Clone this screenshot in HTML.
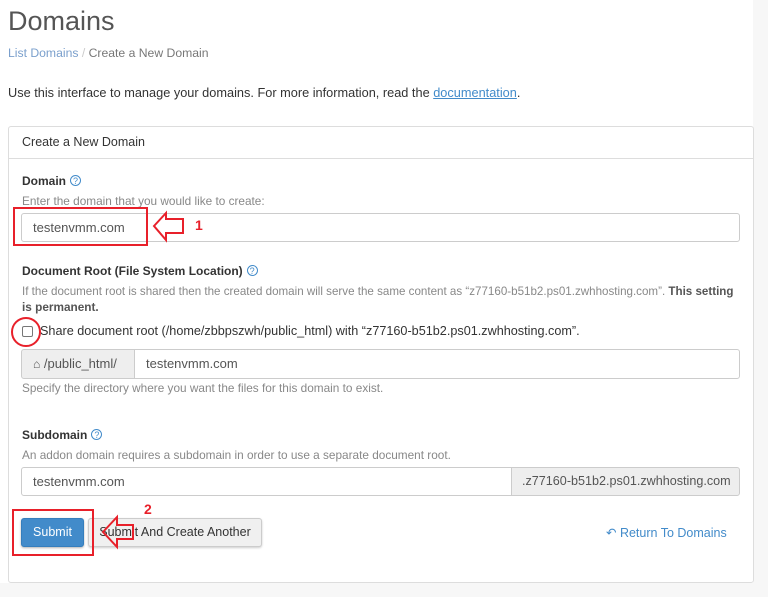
<!DOCTYPE html>
<html><head><meta charset="utf-8"><style>
*{box-sizing:border-box}
body{margin:0;width:768px;height:597px;background:#fff;font-family:"Liberation Sans",sans-serif;color:#333;position:relative;overflow:hidden}
.a{position:absolute;white-space:nowrap}
.t{font-size:12.75px}
.h{font-size:11.8px;color:#888}
.lb{font-size:12px;font-weight:bold;color:#333}
.q{display:inline-block;width:11px;height:11px;border:1px solid #428bca;border-radius:50%;color:#428bca;font-size:9px;text-align:center;line-height:10px;font-weight:normal;vertical-align:1px;margin-left:4px}
.in{position:absolute;border:1px solid #ccc;border-radius:3px;background:#fff;font-size:13px;color:#555;padding-left:11px;line-height:27px}
.ad{position:absolute;background:#eee;border:1px solid #ccc;font-size:13px;color:#555;line-height:27px}
</style></head><body>
<div style="position:absolute;left:753px;top:0;width:15px;height:597px;background:#f7f7f7"></div>
<div style="position:absolute;left:0;top:583px;width:768px;height:14px;background:#f7f7f7"></div>
<div class="a" style="left:8px;top:6px;font-size:27px;color:#555;font-weight:300">Domains</div>
<div class="a" style="left:8px;top:46px;font-size:12.2px;color:#777"><span style="color:#7a9fcc">List Domains</span> <span style="color:#ccc">/</span> Create a New Domain</div>
<div class="a t" style="left:8px;top:85px">Use this interface to manage your domains. For more information, read the <span style="color:#428bca;text-decoration:underline">documentation</span>.</div>
<div style="position:absolute;left:8px;top:126px;width:746px;height:457px;border:1px solid #ddd;border-radius:3px;background:#fff"></div>
<div style="position:absolute;left:9px;top:158px;width:744px;border-top:1px solid #ddd"></div>
<div class="a" style="left:22px;top:135px;font-size:12.5px">Create a New Domain</div>

<div class="a lb" style="left:22px;top:174px">Domain<span class="q">?</span></div>
<div class="a h" style="left:22px;top:194px">Enter the domain that you would like to create:</div>
<div class="in" style="left:21px;top:213px;width:719px;height:29px">testenvmm.com</div>

<div class="a lb" style="left:22px;top:264px">Document Root (File System Location)<span class="q">?</span></div>
<div class="a h" style="left:22px;top:285px;font-size:11.6px">If the document root is shared then the created domain will serve the same content as “z77160-b51b2.ps01.zwhhosting.com”. <b style="color:#555">This setting</b></div>
<div class="a h" style="left:22px;top:300px"><b style="color:#555">is permanent.</b></div>
<div style="position:absolute;left:22px;top:326px;width:11px;height:11px;border:1px solid #777;border-radius:2px;background:#fff"></div>
<div class="a" style="left:40px;top:324px;font-size:12.65px">Share document root (/home/zbbpszwh/public_html) with “z77160-b51b2.ps01.zwhhosting.com”.</div>
<div class="ad" style="left:21px;top:349px;width:114px;height:30px;border-radius:3px 0 0 3px;padding-left:11px"><span style="font-size:12px">&#8962;</span> /public_html/</div>
<div class="in" style="left:134px;top:349px;width:606px;height:30px;border-radius:0 3px 3px 0">testenvmm.com</div>
<div class="a h" style="left:22px;top:381px">Specify the directory where you want the files for this domain to exist.</div>

<div class="a lb" style="left:22px;top:428px">Subdomain<span class="q">?</span></div>
<div class="a h" style="left:22px;top:448px">An addon domain requires a subdomain in order to use a separate document root.</div>
<div class="in" style="left:21px;top:467px;width:491px;height:29px;border-radius:3px 0 0 3px">testenvmm.com</div>
<div class="ad" style="left:511px;top:467px;width:229px;height:29px;border-radius:0 3px 3px 0;padding-left:10px;font-size:12.6px">.z77160-b51b2.ps01.zwhhosting.com</div>

<div style="position:absolute;left:21px;top:518px;width:63px;height:29px;background:#428bca;border:1px solid #357ebd;border-radius:3px;color:#fff;font-size:12.5px;text-align:center;line-height:27px;box-shadow:0 1px 2px rgba(0,0,0,.3)">Submit</div>
<div style="position:absolute;left:88px;top:518px;width:174px;height:29px;background:#f0f0f0;border:1px solid #ccc;border-radius:3px;color:#333;font-size:12.5px;text-align:center;line-height:27px;box-shadow:0 1px 2px rgba(0,0,0,.2)">Submit And Create Another</div>
<div class="a" style="left:606px;top:525px;font-size:12.5px;color:#428bca">&#8630; Return To Domains</div>

<svg style="position:absolute;left:0;top:0" width="768" height="597">
<g fill="none" stroke="#e8202a" stroke-width="2">
<rect x="14" y="208" width="133" height="37"/>
<path d="M154 226 L166 213 L166 219 L183 219 L183 233 L166 233 L166 240 Z"/>
<circle cx="26" cy="332" r="14"/>
<rect x="13" y="510" width="80" height="45"/>
<path d="M103 532 L117 517 L117 525 L133 525 L133 539 L117 539 L117 547 Z"/>
</g>
<text x="195" y="230" fill="#e8202a" font-family="Liberation Sans" font-weight="bold" font-size="14">1</text>
<text x="144" y="514" fill="#e8202a" font-family="Liberation Sans" font-weight="bold" font-size="14">2</text>
</svg>
</body></html>
